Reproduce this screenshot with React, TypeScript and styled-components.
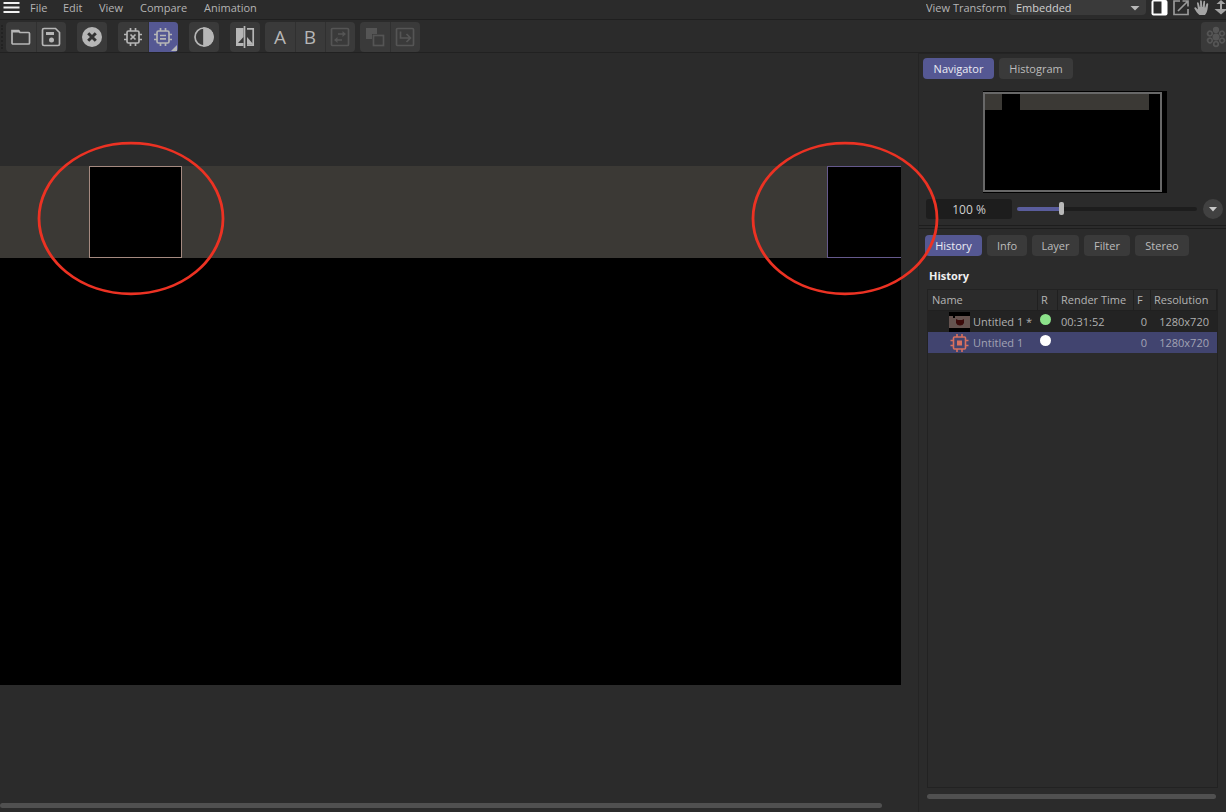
import React from "react";
import styled, { createGlobalStyle, css } from "styled-components";

const GlobalStyle = createGlobalStyle`
  *, *::before, *::after { box-sizing: border-box; }
  html, body { margin: 0; background: #2b2b2b; }
  body {
    font-family: "Open Sans", "Noto Sans", sans-serif;
    font-size: 11px;
    line-height: 16px;
    color: #b4b4b4;
    overflow: hidden;
  }
  button, input, select { font: inherit; color: inherit; }
  button { border: 0; padding: 0; background: none; }
`;

const Window = styled.div`
  position: relative;
  display: flex;
  flex-direction: column;
  height: 100vh;
  overflow: hidden;
`;

const Header = styled.header`
  display: flex;
  justify-content: space-between;
  height: 20px;
  border-bottom: 1px solid #1f1f1f;
  overflow: hidden;
`;

const MenuBar = styled.nav`
  display: flex;
  align-items: flex-start;
  padding-left: 3px;
`;

const MenuToggle = styled.button`
  display: flex;
  width: 17px;
  height: 16px;
  margin-right: 10px;
`;

const MenuItem = styled.button<{ $width: number }>`
  width: ${(p) => p.$width}px;
  height: 15px;
  line-height: 15px;
  text-align: left;
  white-space: nowrap;
`;

const ViewOptions = styled.div`
  display: flex;
  align-items: flex-start;
  flex: 0 0 300px;
  overflow: hidden;
`;

const ViewLabel = styled.label`
  flex: 0 0 83px;
  line-height: 15px;
  white-space: nowrap;
`;

const SelectBox = styled.div`
  display: flex;
  flex: 0 0 137px;
  height: 15px;
  margin-right: 5px;
  border-radius: 0 0 4px 4px;
  background: #3a3a3a;
`;

const Select = styled.select`
  flex: 1;
  min-width: 0;
  padding: 0 0 0 7px;
  border: 0;
  background: transparent;
  color: #d0d0d0;
  line-height: 15px;
  appearance: none;
`;

const Arrow = styled.svg`
  flex: none;
  width: 10px;
  height: 15px;
  margin-right: 6px;
  pointer-events: none;
`;

const HeaderButton = styled.button`
  display: flex;
  flex: 0 0 21px;
  height: 16px;
`;

const Toolbar = styled.div`
  display: flex;
  align-items: center;
  height: 33px;
  padding-top: 1px;
  border-bottom: 1px solid #212121;
  overflow: hidden;
`;

const Grip = styled.div`
  flex: 0 0 2px;
  height: 24px;
  margin: 0 3px 0 1px;
  border-left: 2px dotted #222;
`;

const ToolGroup = styled.div<{ $gap?: number }>`
  display: flex;
  flex: none;
  margin-right: ${(p) => p.$gap ?? 11}px;
  border-radius: 4px;
  background: #3a3a3a;
  overflow: hidden;
`;

const ToolButton = styled.button<{ $active?: boolean; $dim?: boolean }>`
  position: relative;
  display: flex;
  align-items: center;
  justify-content: center;
  width: 30px;
  height: 30px;
  color: ${(p) => (p.$dim ? "#555" : "#b6b6b6")};
  & + & { box-shadow: inset 1px 0 #303030; }
  ${(p) => p.$active && css`&& { background: #555893; box-shadow: none; }`}
`;

const Spacer = styled.div`
  flex: 1;
`;

const EdgeSlot = styled.div`
  flex: 0 0 25px;
  overflow: hidden;
  border-radius: 4px 0 0 4px;
  background: #3a3a3a;
`;

const Main = styled.main`
  display: flex;
  flex: 1;
  min-height: 0;
`;

const Viewport = styled.section`
  display: flex;
  flex-direction: column;
  flex: 1;
  min-width: 0;
  padding-top: 113px;
`;

const RenderImage = styled.div`
  display: flex;
  flex-direction: column;
  flex: 1;
  margin-right: 17px;
  background: #000;
`;

const Band = styled.div`
  display: flex;
  height: 92px;
  padding-left: 89px;
  background: #3b3935;
`;

const Bucket = styled.div<{ $width: number; $color: string; $cut?: boolean }>`
  width: ${(p) => p.$width}px;
  border: 1px solid ${(p) => p.$color};
  ${(p) => p.$cut && css`border-right: 0;`}
  background: #000;
`;

const ScrollArea = styled.div`
  flex: 0 0 127px;
  display: flex;
  align-items: flex-end;
  padding: 0 36px 4px 0;
`;

const ScrollThumb = styled.div`
  flex: 1;
  height: 5px;
  border-radius: 3px;
  background: #505050;
`;

const Side = styled.aside`
  display: flex;
  flex-direction: column;
  flex: 0 0 308px;
  border-left: 1px solid #242424;
`;

const NavigatorPanel = styled.section`
  display: flex;
  flex-direction: column;
  height: 173px;
  padding-top: 4px;
  border-top: 1px solid #242424;
  border-bottom: 1px solid #1d1d1d;
`;

const Tabs = styled.div`
  display: flex;
  gap: 5px;
  flex: none;
  padding-left: 4px;
`;

const Tab = styled.button<{ $active?: boolean; $width: number }>`
  width: ${(p) => p.$width}px;
  height: 21px;
  border-radius: 4px;
  background: ${(p) => (p.$active ? "#555893" : "#3a3a3a")};
  color: ${(p) => (p.$active ? "#ececf4" : "#bcbcbc")};
`;

const Preview = styled.div`
  display: flex;
  width: 184px;
  height: 102px;
  margin: 12px 0 0 64px;
  padding: 1px 5px 1px 0;
  background: #000;
`;

const PreviewFrame = styled.div`
  display: flex;
  flex: 1;
  align-items: flex-start;
  border: 2px solid #686868;
`;

const PreviewStrip = styled.div<{ $width: number; $gap: number }>`
  width: ${(p) => p.$width}px;
  height: 16px;
  margin-right: ${(p) => p.$gap}px;
  background: #3b3935;
`;

const ZoomRow = styled.div`
  display: flex;
  align-items: center;
  height: 20px;
  margin: 6px 3px 0 7px;
`;

const ZoomValue = styled.input`
  width: 86px;
  height: 20px;
  margin-right: 5px;
  padding: 0;
  border: 0;
  border-radius: 3px;
  background: #1d1d1d;
  color: #cfcfcf;
  font-size: 12px;
  text-align: center;
`;

const ZoomSlider = styled.input`
  flex: 1;
  min-width: 0;
  height: 14px;
  margin: 0 6px 0 0;
  background: transparent;
  appearance: none;
  &::-webkit-slider-runnable-track {
    height: 4px;
    border-radius: 2px;
    background: linear-gradient(to right, #5a5d9c 24%, #1d1d1d 24%);
  }
  &::-webkit-slider-thumb {
    appearance: none;
    width: 5px;
    height: 13px;
    margin-top: -5px;
    border-radius: 2px;
    background: #b8b8b8;
  }
`;

const RoundButton = styled.button`
  display: flex;
  align-items: center;
  justify-content: center;
  flex: 0 0 20px;
  height: 20px;
  border-radius: 50%;
  background: #414141;
`;

const HistoryPanel = styled.section`
  display: flex;
  flex: 1;
  flex-direction: column;
  min-height: 0;
  margin-top: 2px;
  padding: 6px 8px 13px 2px;
  border-top: 1px solid #1d1d1d;
`;

const PanelTitle = styled.h2`
  margin: 12px 0 5px 8px;
  color: #f0f0f0;
  font-size: 11px;
  line-height: 16px;
  font-weight: 700;
`;

const TableBox = styled.div`
  flex: 1;
  margin-left: 6px;
  border: 1px solid #222;
`;

const Table = styled.table`
  width: 100%;
  table-layout: fixed;
  border-collapse: separate;
  border-spacing: 0;
`;

const Th = styled.th<{ $width?: number }>`
  width: ${(p) => (p.$width ? `${p.$width}px` : "auto")};
  height: 21px;
  padding: 0 0 0 3px;
  border-right: 1px solid #202020;
  border-bottom: 1px solid #202020;
  font-weight: 400;
  text-align: left;
  white-space: nowrap;
  &:first-child { padding-left: 4px; }
`;

const Row = styled.tr<{ $selected?: boolean }>`
  background: ${(p) => (p.$selected ? "#41446f" : "#232323")};
  color: ${(p) => (p.$selected ? "#a2a3b4" : "#b0b0b0")};
`;

const Td = styled.td<{ $right?: boolean; $end?: number }>`
  height: 21px;
  padding: 1px ${(p) => p.$end ?? 0}px 0 3px;
  text-align: ${(p) => (p.$end ? "right" : "left")};
  white-space: nowrap;
`;

const NameCell = styled.div`
  display: flex;
  align-items: center;
  gap: 3px;
  height: 20px;
  padding-left: 18px;
`;

const Status = styled.div<{ $color: string }>`
  width: 11px;
  height: 11px;
  margin: 0 0 6px -1px;
  border-radius: 50%;
  background: ${(p) => p.$color};
`;

const PanelScroll = styled.div`
  display: flex;
  margin: 6px 2px 0 6px;
`;

const Mark = styled.svg<{ $left: number }>`
  position: absolute;
  top: 141px;
  left: ${(p) => p.$left}px;
  width: 188px;
  height: 156px;
  pointer-events: none;
`;

const Letter = styled.span`
  font-size: 19px;
  line-height: 30px;
`;

const CornerMark = styled.i`
  position: absolute;
  right: 1px;
  bottom: 1px;
  border: 3px solid transparent;
  border-right-color: #b6b6b6;
  border-bottom-color: #b6b6b6;
`;

const Svg = ({ children }: { children: React.ReactNode }) => (
  <svg width="22" height="22" viewBox="0 0 22 22" fill="none" stroke="currentColor" strokeWidth={1.7} aria-hidden="true">
    {children}
  </svg>
);

const Chip = ({ children }: { children: React.ReactNode }) => (
  <Svg>
    <rect x="5" y="5" width="12" height="12" rx="1.5" />
    <path d="M8.5 2v3M13.5 2v3M8.5 17v3M13.5 17v3M2 8.5h3M2 13.5h3M17 8.5h3M17 13.5h3" />
    {children}
  </Svg>
);

const Ring = ({ left }: { left: number }) => (
  <Mark $left={left} viewBox="0 0 188 156" aria-hidden="true">
    <ellipse cx="94" cy="77.5" rx="92" ry="75.3" fill="none" stroke="#ec3223" strokeWidth="2.8" />
  </Mark>
);

const DownArrow = () => (
  <Arrow viewBox="0 0 10 15" aria-hidden="true">
    <path d="M0.5 6h9L5 10.5z" fill="#b8b8b8" />
  </Arrow>
);

const menus: [string, number][] = [["File", 33], ["Edit", 36], ["View", 41], ["Compare", 64], ["Animation", 60]];

export default function App() {
  return (
    <Window>
      <GlobalStyle />
      <Header>
        <MenuBar>
          <MenuToggle aria-label="Menu">
            <svg width="17" height="16" viewBox="0 0 17 16" aria-hidden="true">
              <path d="M0.5 3h16M0.5 7.5h16M0.5 12h16" stroke="#f0f0f0" strokeWidth="2" />
            </svg>
          </MenuToggle>
          {menus.map(([name, width]) => (
            <MenuItem key={name} $width={width}>{name}</MenuItem>
          ))}
        </MenuBar>
        <ViewOptions>
          <ViewLabel htmlFor="transform">View Transform</ViewLabel>
          <SelectBox>
            <Select id="transform" defaultValue="Embedded">
              <option>Embedded</option>
            </Select>
            <DownArrow />
          </SelectBox>
          <HeaderButton aria-label="Toggle panel">
            <svg width="17" height="16" viewBox="0 0 17 16" aria-hidden="true">
              <rect x="0.5" y="0" width="16" height="15.5" rx="2" fill="#fff" />
              <rect x="2.5" y="1.5" width="8" height="12" fill="#2b2b2b" />
            </svg>
          </HeaderButton>
          <HeaderButton aria-label="Open in window">
            <svg width="18" height="16" viewBox="0 0 18 16" fill="none" stroke="#999" strokeWidth="1.7" aria-hidden="true">
              <path d="M8 1H2v13.5h14V9M6 11L15.5 1.5M10.500 1H16v5.500" />
            </svg>
          </HeaderButton>
          <HeaderButton aria-label="Pan">
            <svg width="17" height="16" viewBox="-1 0 17 16" aria-hidden="true">
              <path d="M5.500 15C3.600 13.600 1.600 10.800.4 8.400c-.3-1 .9-1.500 1.600-.7L4 9.600 3 3.200c-.1-1.200 1.400-1.400 1.700-.3L5.800 7h.4L6 1.200C6-.1 7.800-.1 7.900 1.200L8.200 7h.4L9.400 1.500c.2-1.200 1.800-1 1.700.2L10.800 7.400h.4l1.200-3.600c.4-1.100 2-.7 1.800.4-.5 3-.4 7.800-3.200 10.800z" fill="#a4a4a4" />
            </svg>
          </HeaderButton>
          <HeaderButton aria-label="Dolly">
            <svg width="14" height="16" viewBox="0 0 14 16" aria-hidden="true">
              <path d="M7 0l4.500 4H8v5h5.500L7 14.500.5 9H6V4H2.500z" fill="#a4a4a4" />
            </svg>
          </HeaderButton>
        </ViewOptions>
      </Header>

      <Toolbar>
        <Grip />
        <ToolGroup>
          <ToolButton aria-label="Open">
            <Svg>
              <path d="M2 17V4.500h6.500L10 6.500h8.500q1 0 1 1V17q0 1-1 1H3q-1 0-1-1z" />
              <path d="M2 4h7l1.500 2.500H2z" fill="currentColor" stroke="none" />
            </Svg>
          </ToolButton>
          <ToolButton aria-label="Save">
            <Svg>
              <path d="M4 2.500h11.500l4 4V18q0 1.500-1.500 1.500H4Q2.500 19.500 2.500 18V4Q2.500 2.500 4 2.500z" />
              <rect x="6" y="6" width="8" height="3" fill="currentColor" stroke="none" />
              <circle cx="11.500" cy="14" r="2.500" fill="currentColor" stroke="none" />
            </Svg>
          </ToolButton>
        </ToolGroup>
        <ToolGroup>
          <ToolButton aria-label="Stop">
            <Svg>
              <circle cx="11" cy="11" r="10" fill="currentColor" stroke="none" />
              <path d="M7.200 7.200l7.600 7.600M14.800 7.200l-7.600 7.600" stroke="#333" strokeWidth="3" />
            </Svg>
          </ToolButton>
        </ToolGroup>
        <ToolGroup>
          <ToolButton aria-label="Clear cache">
            <Chip><path d="M8.500 8.500l5 5M13.500 8.500l-5 5" /></Chip>
          </ToolButton>
          <ToolButton $active aria-label="Snapshot">
            <Chip><path d="M8 9.500h6M8 12.800h6" /></Chip>
            <CornerMark />
          </ToolButton>
        </ToolGroup>
        <ToolGroup>
          <ToolButton aria-label="Contrast">
            <Svg>
              <circle cx="11" cy="11" r="9" />
              <path d="M11 2a9 9 0 0 1 0 18z" fill="currentColor" />
            </Svg>
          </ToolButton>
        </ToolGroup>
        <ToolGroup $gap={5}>
          <ToolButton aria-label="Compare images">
            <Svg>
              <path d="M2 2h7.500v18H2z" fill="currentColor" stroke="none" />
              <path d="M10.500 0v22M13 2.800h6.200v16.400H13" />
              <path d="M9.500 11v6H4z" fill="#393939" stroke="none" />
              <path d="M13 11l6.500 7.500H13z" fill="currentColor" stroke="none" />
            </Svg>
          </ToolButton>
        </ToolGroup>
        <ToolGroup $gap={5}>
          <ToolButton aria-label="Set A"><Letter>A</Letter></ToolButton>
          <ToolButton aria-label="Set B"><Letter>B</Letter></ToolButton>
          <ToolButton $dim aria-label="Swap A and B">
            <Svg>
              <rect x="2.500" y="2.500" width="17" height="17" rx="1" />
              <path d="M9 8h5M8 14h5" />
              <path d="M13.500 5l3.500 3-3.500 3zM8.500 11l-3.500 3 3.500 3z" fill="currentColor" stroke="none" />
            </Svg>
          </ToolButton>
        </ToolGroup>
        <ToolGroup $gap={0}>
          <ToolButton $dim aria-label="Difference">
            <Svg>
              <path d="M2 2h11v6H8v5H2z" fill="currentColor" stroke="none" />
              <rect x="9.500" y="9.500" width="10" height="10" />
            </Svg>
          </ToolButton>
          <ToolButton $dim aria-label="Send image">
            <Svg>
              <rect x="2.500" y="2.500" width="17" height="17" rx="1" />
              <path d="M6.500 5.500v6.500h9M12.500 8l4 4-4 4" />
            </Svg>
          </ToolButton>
        </ToolGroup>
        <Spacer />
        <EdgeSlot>
          <ToolButton $dim aria-label="Plug-in">
            <Svg>
              <circle cx="11" cy="11" r="3.500" fill="currentColor" stroke="none" />
              {[60, 120, 180, 240, 300, 0].map((a) => (
                <circle key={a} cx="11" cy="4" r="2.300" fill={a ? "#3a3a3a" : "currentColor"} transform={`rotate(${a} 11 11)`} />
              ))}
            </Svg>
          </ToolButton>
        </EdgeSlot>
      </Toolbar>

      <Main>
        <Viewport>
          <RenderImage>
            <Band>
              <Bucket $width={93} $color="#a58a80" />
              <Spacer />
              <Bucket $width={74} $color="#65598c" $cut />
            </Band>
          </RenderImage>
          <ScrollArea><ScrollThumb /></ScrollArea>
        </Viewport>

        <Side>
          <NavigatorPanel>
            <Tabs>
              <Tab $active $width={71}>Navigator</Tab>
              <Tab $width={74}>Histogram</Tab>
            </Tabs>
            <Preview>
              <PreviewFrame>
                <PreviewStrip $width={17} $gap={18} />
                <PreviewStrip $width={129} $gap={0} />
              </PreviewFrame>
            </Preview>
            <ZoomRow>
              <ZoomValue aria-label="Zoom value" defaultValue="100 %" />
              <ZoomSlider type="range" aria-label="Zoom" min={0} max={100} defaultValue={24} />
              <RoundButton aria-label="Zoom presets">
                <svg width="8" height="5" viewBox="0 0 8 5" aria-hidden="true">
                  <path d="M0 0h8L4 4.500z" fill="#c8c8c8" />
                </svg>
              </RoundButton>
            </ZoomRow>
          </NavigatorPanel>

          <HistoryPanel>
            <Tabs>
              <Tab $active $width={57}>History</Tab>
              <Tab $width={40}>Info</Tab>
              <Tab $width={47}>Layer</Tab>
              <Tab $width={46}>Filter</Tab>
              <Tab $width={54}>Stereo</Tab>
            </Tabs>
            <PanelTitle>History</PanelTitle>
            <TableBox>
              <Table>
                <thead>
                  <tr>
                    <Th>Name</Th>
                    <Th $width={20}>R</Th>
                    <Th $width={76}>Render Time</Th>
                    <Th $width={17}>F</Th>
                    <Th $width={66}>Resolution</Th>
                  </tr>
                </thead>
                <tbody>
                  <Row>
                    <Td>
                      <NameCell>
                        <svg width="21" height="20" viewBox="0 0 21 20" aria-hidden="true">
                          <path d="M0 0h21v20H0z" />
                          <path d="M0 4h4v2h2V4h15v12H0z" fill="#65534f" />
                          <path d="M7 7l2 1h4l2-1v4q-1 2.500-4 2.500T7 11z" fill="#3a0a0a" />
                        </svg>
                        Untitled 1 *
                      </NameCell>
                    </Td>
                    <Td><Status $color="#8ce28a" /></Td>
                    <Td>00:31:52</Td>
                    <Td $end={4}>0</Td>
                    <Td $end={8}>1280x720</Td>
                  </Row>
                  <Row $selected>
                    <Td>
                      <NameCell>
                        <svg width="21" height="20" viewBox="0 0 21 20" fill="none" stroke="#d9705f" strokeWidth="1.600" aria-hidden="true">
                          <rect x="4.500" y="4" width="12" height="12" rx="1" />
                          <path d="M8 1v3M13 1v3M8 16v3M13 16v3M1.500 7.500h3M1.500 12.500h3M16.500 7.500h3M16.500 12.500h3" />
                          <path d="M8 7.500h5v5H8z" fill="#d9705f" stroke="none" />
                        </svg>
                        Untitled 1
                      </NameCell>
                    </Td>
                    <Td><Status $color="#fff" /></Td>
                    <Td />
                    <Td $end={4}>0</Td>
                    <Td $end={8}>1280x720</Td>
                  </Row>
                </tbody>
              </Table>
            </TableBox>
            <PanelScroll><ScrollThumb /></PanelScroll>
          </HistoryPanel>
        </Side>
      </Main>

      <Ring left={37} />
      <Ring left={751} />
    </Window>
  );
}
